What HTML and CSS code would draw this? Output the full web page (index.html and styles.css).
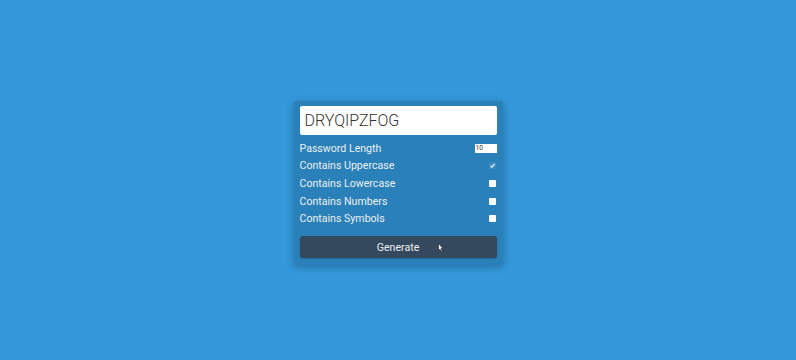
FILE: index.html
```html
<!DOCTYPE html>
<html>
<head>
<meta charset="utf-8">
<link rel="stylesheet" href="styles.css">
</head>
<body>
<div class="card">
  <div class="result">DRYQIPZFOG</div>
  <div class="settings">
    <div class="row"><span>Password Length</span><input class="num" type="number" value="10"></div>
    <div class="row"><span>Contains Uppercase</span><input class="chk" type="checkbox" checked></div>
    <div class="row"><span>Contains Lowercase</span><input class="chk" type="checkbox"></div>
    <div class="row"><span>Contains Numbers</span><input class="chk" type="checkbox"></div>
    <div class="row"><span>Contains Symbols</span><input class="chk" type="checkbox"></div>
  </div>
  <button class="btn">Generate
    <svg class="cursor" width="6" height="9" viewBox="0 0 6 9"><path d="M0.5 0.5 L0.5 7.5 L2 6 L3.2 8.5 L4.2 8 L3 5.6 L5 5.6 Z" fill="#fff" stroke="#222" stroke-width="0.6"/></svg>
  </button>
</div>
</body>
</html>
```

FILE: styles.css
```css
html, body {
  margin: 0;
  padding: 0;
}
body {
  width: 796px;
  height: 360px;
  background: #3498db;
  font-family: Roboto, "Liberation Sans", sans-serif;
  display: flex;
  align-items: flex-start;
  justify-content: center;
}
.card {
  margin-top: 101px;
  width: 209px;
  box-sizing: border-box;
  padding: 5px 6px 7px 6px;
  background: #2a80b9;
  border-radius: 2px;
  box-shadow: 0 2px 8px rgba(0, 0, 0, 0.28);
  display: flex;
  flex-direction: column;
}
.result {
  height: 29px;
  background: #fff;
  color: #333;
  border-radius: 2px;
  font-size: 16px;
  font-weight: 300;
  line-height: 30px;
  padding-left: 5px;
}
.settings {
  margin-top: 4px;
  display: flex;
  flex-direction: column;
}
.row {
  box-sizing: border-box;
  height: 17.6px;
  display: flex;
  align-items: center;
  justify-content: space-between;
  color: #ecf0f1;
  font-size: 10.6px;
  font-weight: 400;
  padding-top: 1px;
}
.num {
  width: 22px;
  height: 9px;
  box-sizing: border-box;
  border: none;
  padding: 0 0 0 1px;
  margin: 0;
  font-size: 6.5px;
  font-family: Roboto, "Liberation Sans", sans-serif;
  color: #333;
  background: #fff;
}
.num::-webkit-inner-spin-button,
.num::-webkit-outer-spin-button {
  -webkit-appearance: none;
  margin: 0;
}
.chk {
  -webkit-appearance: none;
  appearance: none;
  width: 7px;
  height: 7px;
  margin: 0 1px 0 0;
  background: #fff;
  border-radius: 1px;
}
.chk:checked {
  background: #3b8ac4 url("data:image/svg+xml;utf8,<svg xmlns='http://www.w3.org/2000/svg' viewBox='0 0 7 7'><path d='M1.5 3.8 L2.9 5.1 L5.6 1.8' fill='none' stroke='white' stroke-width='1.1'/></svg>") no-repeat center / 7px 7px;
}
.btn {
  margin-top: 9.5px;
  height: 22px;
  border: none;
  border-radius: 3px;
  background: #34495e;
  color: #ecf0f1;
  font-family: Roboto, "Liberation Sans", sans-serif;
  font-size: 10.6px;
  position: relative;
  padding: 0;
  box-shadow: 0 1px 2px rgba(0, 0, 0, 0.2);
}
.cursor {
  position: absolute;
  left: 138px;
  top: 7px;
}
```
